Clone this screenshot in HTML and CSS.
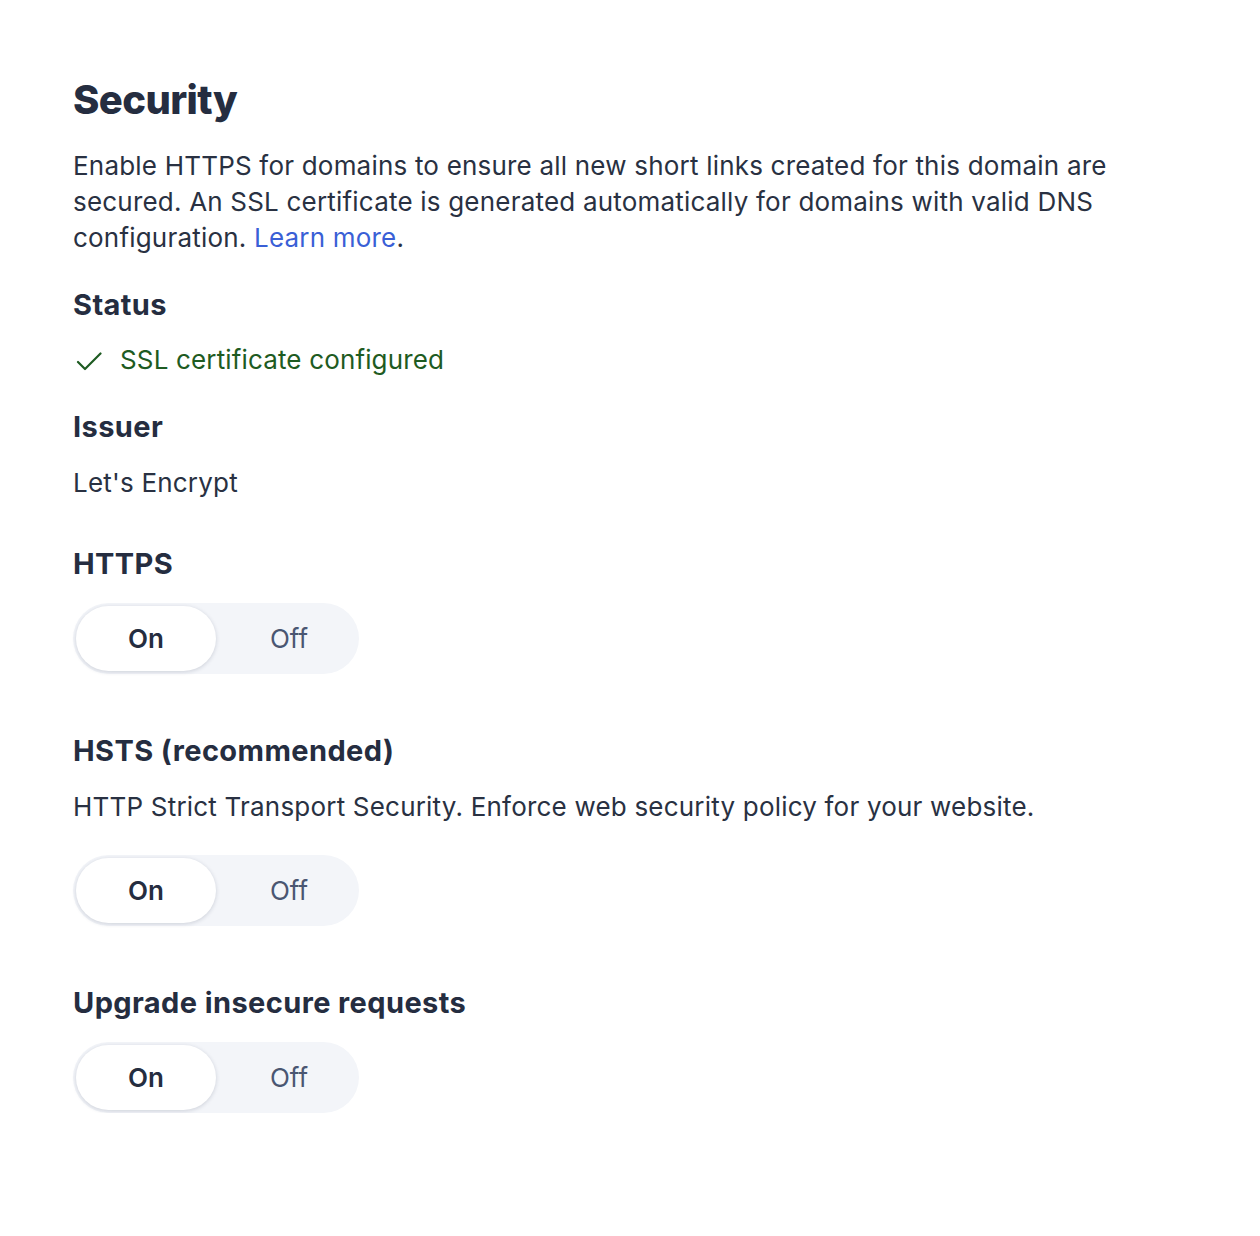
FILE: index.html
```html
<!DOCTYPE html>
<html lang="en">
<head>
<meta charset="utf-8">
<title>Security</title>
<link rel="stylesheet" href="styles.css">
</head>
<body>
<main class="page">
  <h1 class="title">Security</h1>
  <p class="lead">Enable HTTPS for domains to ensure all new short links created for this domain are secured. An SSL certificate is generated automatically for domains with valid DNS configuration. <a class="link" href="#">Learn more</a>.</p>

  <section class="field">
    <h2 class="label">Status</h2>
    <div class="status">
      <svg class="check" viewBox="0 0 26 26" width="26" height="26" aria-hidden="true"><path d="M2 15l7 7L24.5 6.5" fill="none" stroke="#1e5b22" stroke-width="2.2" stroke-linecap="round" stroke-linejoin="round"/></svg>
      <span>SSL certificate configured</span>
    </div>
  </section>

  <section class="field">
    <h2 class="label">Issuer</h2>
    <p class="text">Let's Encrypt</p>
  </section>

  <section class="field field-toggle">
    <h2 class="label">HTTPS</h2>
    <div class="toggle">
      <span class="opt opt-on">On</span>
      <span class="opt">Off</span>
    </div>
  </section>

  <section class="field field-toggle field-wide">
    <h2 class="label">HSTS (recommended)</h2>
    <p class="text">HTTP Strict Transport Security. Enforce web security policy for your website.</p>
    <div class="toggle toggle-after-text">
      <span class="opt opt-on">On</span>
      <span class="opt">Off</span>
    </div>
  </section>

  <section class="field field-toggle field-wide">
    <h2 class="label">Upgrade insecure requests</h2>
    <div class="toggle">
      <span class="opt opt-on">On</span>
      <span class="opt">Off</span>
    </div>
  </section>
</main>
</body>
</html>
```

FILE: styles.css
```css
html, body {
  margin: 0;
  padding: 0;
  background: #ffffff;
}
body {
  font-family: "Inter", "Lato", "Liberation Sans", sans-serif;
  color: #293142;
}
.page {
  padding: 76px 73px 0 73px;
  width: 1080px;
}
.title {
  margin: 0;
  font-size: 40px;
  line-height: 48px;
  font-weight: 800;
  letter-spacing: -0.6px;
  color: #252d40;
}
.lead {
  margin: 24px 0 0 0;
  font-size: 26px;
  line-height: 36px;
  letter-spacing: 0.2px;
}
.link {
  color: #3a5fd6;
  text-decoration: none;
}
.field {
  margin-top: 31px;
}
.field-toggle {
  margin-top: 45px;
}
.field-wide {
  margin-top: 59px;
}
.label {
  margin: 0;
  font-size: 29px;
  line-height: 36px;
  font-weight: 700;
  letter-spacing: 0.4px;
  color: #252d40;
}
.text {
  margin: 20px 0 0 0;
  font-size: 26px;
  line-height: 36px;
  letter-spacing: 0.2px;
}
.status {
  margin-top: 19px;
  display: flex;
  align-items: center;
  gap: 18px;
  font-size: 26px;
  line-height: 36px;
  letter-spacing: 0.15px;
  color: #1e5b22;
}
.check {
  margin-left: 3px;
  flex: none;
}
.toggle {
  margin-top: 21px;
  width: 286px;
  height: 71px;
  box-sizing: border-box;
  padding: 3px;
  border-radius: 36px;
  background: #f3f5f9;
  display: flex;
}
.toggle-after-text {
  margin-top: 30px;
}
.opt {
  flex: 1;
  display: flex;
  align-items: center;
  justify-content: center;
  padding-left: 6px;
  border-radius: 33px;
  font-size: 26px;
  color: #4a5672;
}
.opt-on {
  flex: none;
  width: 140px;
  padding-left: 0;
  background: #ffffff;
  color: #252d40;
  font-weight: 600;
  box-shadow: 0 1px 4px rgba(30, 40, 70, 0.18);
}
```
